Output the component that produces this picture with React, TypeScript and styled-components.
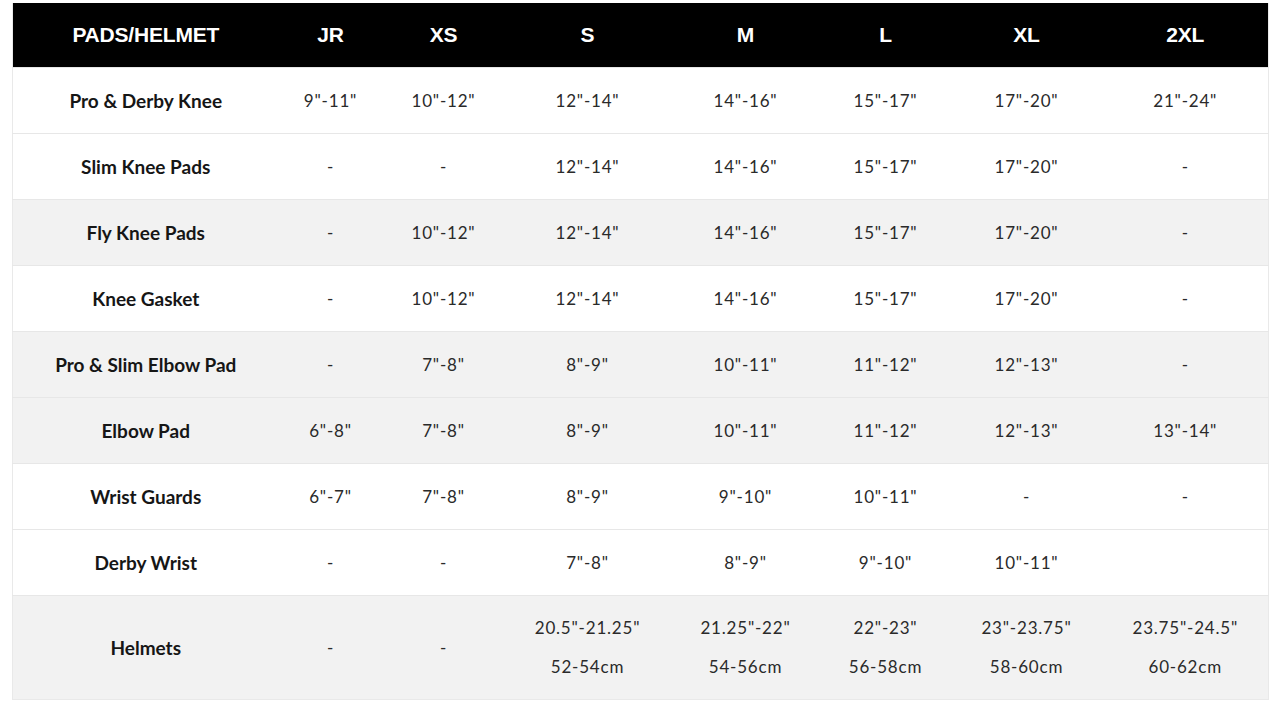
import React from "react";
import styled, { createGlobalStyle } from "styled-components";

const Global = createGlobalStyle`
  html, body { margin: 0; padding: 0; background: #ffffff; }
  body { font-family: "Lato", "Open Sans", sans-serif; }
`;

const Page = styled.div`
  padding: 3px 12px 0 12px;
  width: 1280px;
  box-sizing: border-box;
`;

const Table = styled.table`
  width: 1256px;
  border-collapse: collapse;
  table-layout: fixed;
  border-left: 1px solid #e9e9e9;
  border-right: 1px solid #e9e9e9;
  border-bottom: 1px solid #e9e9e9;
`;

const HeadRow = styled.tr`
  background: #000000;
  height: 64px;
`;

const HeadCell = styled.th`
  color: #ffffff;
  font-family: "Liberation Sans", Arial, sans-serif;
  font-weight: 700;
  font-size: 21px;
  letter-spacing: -0.2px;
  text-align: center;
  vertical-align: middle;
  padding: 0;
`;

const Row = styled.tr<{ $shade: boolean; $tall?: boolean }>`
  background: ${(p) => (p.$shade ? "#f2f2f2" : "#ffffff")};
  height: ${(p) => (p.$tall ? "104px" : "66px")};
  border-top: 1px solid #e7e7e7;
`;

const LabelCell = styled.td`
  font-family: "Lato", "Open Sans", sans-serif;
  font-weight: 700;
  font-size: 19px;
  color: #161616;
  text-align: center;
  vertical-align: middle;
  padding: 0;
`;

const Cell = styled.td`
  font-family: "Lato", "Open Sans", sans-serif;
  font-weight: 400;
  font-size: 17px;
  letter-spacing: 0.8px;
  color: #2a2a2a;
  text-align: center;
  vertical-align: middle;
  padding: 0;
  line-height: 39px;
`;

const Line = styled.div`
  line-height: 39px;
`;

const headers = ["PADS/HELMET", "JR", "XS", "S", "M", "L", "XL", "2XL"];
const widths = [266, 104, 122, 166, 150, 130, 152, 166];

const rows: { label: string; vals: string[]; shade: boolean }[] = [
  { label: "Pro & Derby Knee", vals: ['9"-11"', '10"-12"', '12"-14"', '14"-16"', '15"-17"', '17"-20"', '21"-24"'], shade: false },
  { label: "Slim Knee Pads", vals: ["-", "-", '12"-14"', '14"-16"', '15"-17"', '17"-20"', "-"], shade: false },
  { label: "Fly Knee Pads", vals: ["-", '10"-12"', '12"-14"', '14"-16"', '15"-17"', '17"-20"', "-"], shade: true },
  { label: "Knee Gasket", vals: ["-", '10"-12"', '12"-14"', '14"-16"', '15"-17"', '17"-20"', "-"], shade: false },
  { label: "Pro & Slim Elbow Pad", vals: ["-", '7"-8"', '8"-9"', '10"-11"', '11"-12"', '12"-13"', "-"], shade: true },
  { label: "Elbow Pad", vals: ['6"-8"', '7"-8"', '8"-9"', '10"-11"', '11"-12"', '12"-13"', '13"-14"'], shade: true },
  { label: "Wrist Guards", vals: ['6"-7"', '7"-8"', '8"-9"', '9"-10"', '10"-11"', "-", "-"], shade: false },
  { label: "Derby Wrist", vals: ["-", "-", '7"-8"', '8"-9"', '9"-10"', '10"-11"', ""], shade: false },
];

const helmets: string[][] = [
  ["-"],
  ["-"],
  ['20.5"-21.25"', "52-54cm"],
  ['21.25"-22"', "54-56cm"],
  ['22"-23"', "56-58cm"],
  ['23"-23.75"', "58-60cm"],
  ['23.75"-24.5"', "60-62cm"],
];

export default function App() {
  return (
    <Page>
      <Global />
      <Table>
        <colgroup>
          {widths.map((w, i) => (
            <col key={i} style={{ width: w }} />
          ))}
        </colgroup>
        <thead>
          <HeadRow>
            {headers.map((h) => (
              <HeadCell key={h}>{h}</HeadCell>
            ))}
          </HeadRow>
        </thead>
        <tbody>
          {rows.map((r) => (
            <Row key={r.label} $shade={r.shade}>
              <LabelCell>{r.label}</LabelCell>
              {r.vals.map((v, i) => (
                <Cell key={i}>{v}</Cell>
              ))}
            </Row>
          ))}
          <Row $shade $tall>
            <LabelCell>Helmets</LabelCell>
            {helmets.map((lines, i) => (
              <Cell key={i}>
                {lines.map((l, j) => (
                  <Line key={j}>{l}</Line>
                ))}
              </Cell>
            ))}
          </Row>
        </tbody>
      </Table>
    </Page>
  );
}
